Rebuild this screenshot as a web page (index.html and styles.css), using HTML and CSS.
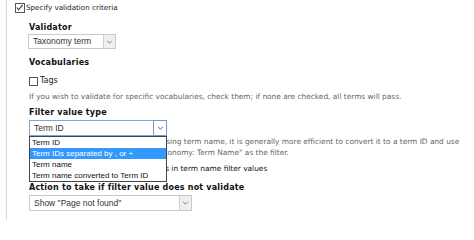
FILE: index.html
```html
<!DOCTYPE html>
<html>
<head>
<meta charset="utf-8">
<link rel="stylesheet" href="styles.css">
</head>
<body>
<div class="frame">
  <div class="legend">
    <span class="cb"><svg viewBox="0 0 10 10" width="10" height="10"><polyline points="2,5 4,7.5 8.5,2" fill="none" stroke="#333" stroke-width="1.2"/></svg></span>
    <span class="label">Specify validation criteria</span>
  </div>
  <div class="content">
    <div class="heading h-validator">Validator</div>
    <div class="select s1"><span class="val">Taxonomy term</span><span class="arrow"><svg viewBox="0 0 8 5" width="7" height="4"><polyline points="1,1 4,4 7,1" fill="none" stroke="#666" stroke-width="1"/></svg></span></div>
    <div class="heading h-vocab">Vocabularies</div>
    <div class="check-row tags"><span class="cb"></span><span class="label">Tags</span></div>
    <div class="help help1">If you wish to validate for specific vocabularies, check them; if none are checked, all terms will pass.</div>
    <div class="heading h-filter">Filter value type</div>
    <div class="select-wrap">
      <div class="select s2 focused"><span class="val">Term ID</span><span class="arrow"><svg viewBox="0 0 8 5" width="7" height="4"><polyline points="1,1 4,4 7,1" fill="none" stroke="#333" stroke-width="1"/></svg></span></div>
      <ul class="dropdown">
        <li>Term ID</li>
        <li class="active">Term IDs separated by , or +</li>
        <li>Term name</li>
        <li>Term name converted to Term ID</li>
      </ul>
    </div>
    <div class="help help2">Select the form of this argument; if using term name, it is generally more efficient to convert it to a term ID and use<br>"Taxonomy: Term ID" rather than "Taxonomy: Term Name" as the filter.</div>
    <div class="check-row transform"><span class="cb"></span><span class="label">Transform dashes in URL to spaces in term name filter values</span></div>
    <div class="heading h-action">Action to take if filter value does not validate</div>
    <div class="select s3"><span class="val">Show "Page not found"</span><span class="arrow"><svg viewBox="0 0 8 5" width="7" height="4"><polyline points="1,1 4,4 7,1" fill="none" stroke="#666" stroke-width="1"/></svg></span></div>
  </div>
</div>
</body>
</html>
```
FILE: styles.css
```css
html, body {
  margin: 0;
  padding: 0;
  background: #fff;
}
body {
  width: 474px;
  height: 220px;
  overflow: hidden;
  font-family: "DejaVu Sans", Verdana, sans-serif;
  color: #222;
}
.frame {
  margin-left: 6px;
  border-left: 1px solid #d6d6d6;
  height: 220px;
  box-sizing: border-box;
  padding-top: 3px;
}
.legend {
  display: flex;
  align-items: center;
  height: 10px;
  padding-left: 8px;
  gap: 1px;
}
.cb {
  display: inline-block;
  width: 9px;
  height: 9px;
  border: 1px solid #555;
  box-sizing: border-box;
  background: #fff;
  flex: none;
  position: relative;
}
.cb svg {
  display: block;
  width: 9px;
  height: 9px;
  margin: -1px;
}
.legend .cb {
  width: 10px;
  height: 10px;
}
.label {
  font-size: 7px;
  line-height: 10px;
  color: #222;
}
.legend .label {
  font-size: 7.2px;
}
.tags .label {
  font-size: 8px;
}
.content {
  padding-left: 22px;
}
.heading {
  font-weight: bold;
  font-size: 8px;
  line-height: 11px;
  color: #111;
  letter-spacing: 0.2px;
}
.h-validator { margin-top: 9px; }
.h-vocab { margin-top: 8px; }
.h-filter { margin-top: 5px; }
.h-action { margin-top: 8px; }
.select {
  display: flex;
  align-items: stretch;
  box-sizing: border-box;
  height: 15px;
  border: 1px solid #c9c9c9;
  background: #fff;
  font-family: "Liberation Sans", Arial, sans-serif;
  font-size: 8.5px;
  color: #333;
}
.select .val {
  flex: 1;
  padding-left: 4px;
  line-height: 13px;
  white-space: nowrap;
  overflow: hidden;
}
.select .arrow {
  width: 11px;
  flex: none;
  border-left: 1px solid #cfcfcf;
  background: #efefef;
  display: flex;
  align-items: center;
  justify-content: center;
}
.s1 { width: 88px; margin-top: 1px; margin-left: -1px; }
.s2 { width: 138px; height: 16px; }
.s2 .val { line-height: 14px; }
.s3 { width: 163px; height: 16px; margin-top: 2px; }
.s3 .val { line-height: 14px; }
.focused {
  border-color: #7fa7d6;
}
.focused .arrow {
  background: #fff;
  border: 1px solid #6f9ad0;
  margin: -1px -1px -1px 0;
  width: 12px;
}
.select-wrap {
  position: relative;
  margin-top: 2px;
}
.dropdown {
  position: absolute;
  top: 16px;
  left: 0;
  width: 138px;
  box-sizing: border-box;
  margin: 0;
  padding: 0;
  list-style: none;
  border: 1px solid #444;
  background: #fff;
  font-family: "Liberation Sans", Arial, sans-serif;
  font-size: 8px;
  color: #111;
  z-index: 2;
}
.dropdown li {
  height: 11px;
  line-height: 11px;
  padding-left: 2px;
  white-space: nowrap;
}
.dropdown li.active {
  background: #3399ff;
  color: #fff;
}
.help {
  font-size: 7.4px;
  color: #666;
  line-height: 10px;
  white-space: nowrap;
}
.help1 { margin-top: 6px; }
.help2 { margin-top: 1px; line-height: 10.5px; }
.check-row {
  display: flex;
  align-items: center;
  gap: 2px;
  height: 10px;
}
.tags { margin-top: 8px; }
.transform { margin-top: 6px; }
.transform .label { font-size: 7.4px; color: #111; }
```
